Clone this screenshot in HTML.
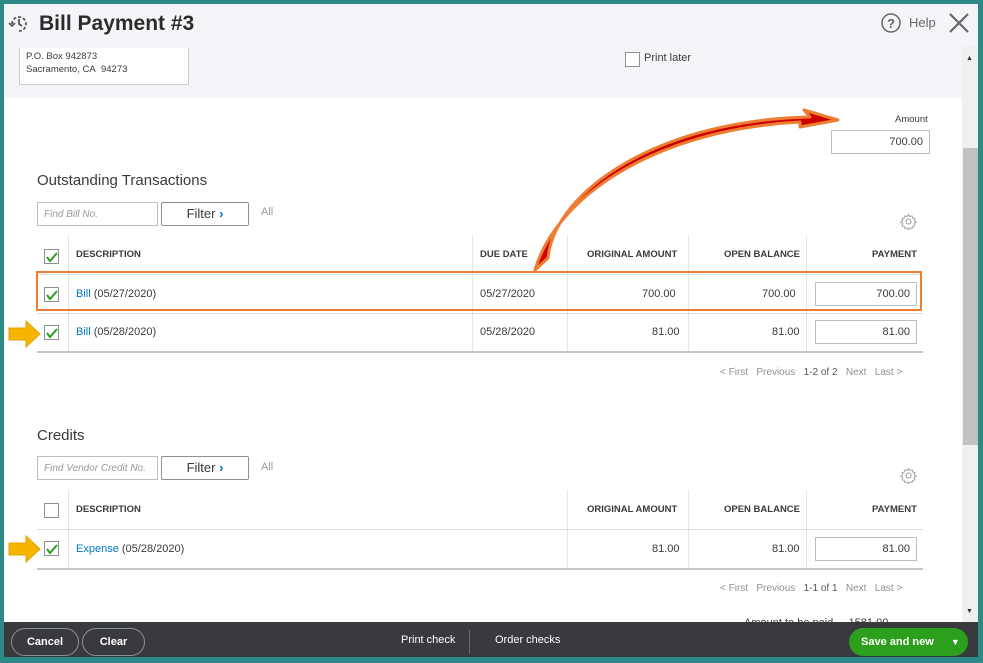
<!DOCTYPE html>
<html><head><style>
*{margin:0;padding:0;box-sizing:border-box}
body{width:983px;height:663px;overflow:hidden;background:#2e8a86;font-family:"Liberation Sans",sans-serif;color:#393a3d;position:relative}
.a{position:absolute}
.dlg{left:4px;top:4px;width:974px;height:653px;background:#fff;overflow:hidden}
.t{font-size:11px}
.h{font-size:9.5px;font-weight:bold;color:#393a3d}
.cb{width:15px;height:15px;border:1px solid #8d9096;background:#fff}
.cb svg{position:absolute;left:1px;top:1px}
.vl{width:1px;background:#e3e5e8}
.inp{border:1px solid #babec5;background:#fff;font-size:11px;text-align:right;padding-right:6px;line-height:22px}
.lnk{color:#0077c5}
.btn{border:1px solid #8d9096;border-radius:2px;background:#fff;font-size:13px;text-align:center}
.pg{font-size:10px;color:#8d9096}
</style></head><body>
<div class="a dlg">
 <div class="a" style="left:0;top:0;width:974px;height:94px;background:#f4f5f8"></div>
 <svg class="a" style="left:4px;top:9px" width="22" height="22" viewBox="0 0 22 22"><path d="M4 11a7 7 0 1 1 7 7" fill="none" stroke="#555" stroke-width="1.8" stroke-dasharray="3 2"/><path d="M11 6v5l3 2" fill="none" stroke="#555" stroke-width="1.8"/><path d="M1 10l3 3 3-3" fill="none" stroke="#555" stroke-width="1.6"/></svg>
 <div class="a" style="left:35px;top:8px;font-size:21px;font-weight:bold;color:#2b2b2b">Bill Payment #3</div>
 <svg class="a" style="left:877px;top:9px" width="20" height="20"><circle cx="10" cy="10" r="9" fill="none" stroke="#666" stroke-width="1.5"/><text x="10" y="15" font-size="13" font-weight="bold" text-anchor="middle" fill="#666" font-family="Liberation Sans">?</text></svg>
 <div class="a" style="left:905px;top:11px;font-size:13px;color:#666">Help</div>
 <svg class="a" style="left:945px;top:9px" width="20" height="20"><path d="M1 1L19 19M19 1L1 19" stroke="#666" stroke-width="2.2"/></svg>
 <div class="a" style="left:15px;top:44px;width:170px;height:37px;background:#fff;border:1px solid #c9cbd0;border-top:none;font-size:9.5px;line-height:13px;padding:2px 6px">P.O. Box 942873<br>Sacramento, CA&nbsp; 94273</div>
 <div class="a cb" style="left:621px;top:48px"></div>
 <div class="a t" style="left:640px;top:48px">Print later</div>
 <div class="a" style="left:958px;top:42px;width:16px;height:580px;background:#f0f0f0"></div>
 <div class="a" style="left:959px;top:144px;width:15px;height:297px;background:#c1c1c1"></div>
 <div class="a" style="left:962px;top:51px;font-size:7px;color:#333">▲</div>
 <div class="a" style="left:962px;top:604px;font-size:7px;color:#333">▼</div>

 <div class="a" style="left:891px;top:110px;font-size:9.5px">Amount</div>
 <div class="a inp" style="left:827px;top:126px;width:99px;height:24px">700.00</div>

 <div class="a" style="left:33px;top:168px;font-size:15px">Outstanding Transactions</div>
 <div class="a" style="left:33px;top:198px;width:121px;height:24px;border:1px solid #babec5;font-size:10px;font-style:italic;color:#999;padding:6px 6px">Find Bill No.</div>
 <div class="a btn" style="left:157px;top:198px;width:88px;height:24px;line-height:22px">Filter <b style="color:#0077c5">›</b></div>
 <div class="a t" style="left:257px;top:202px;color:#999">All</div>
 <svg class="a" style="left:896px;top:209px" width="17" height="17" viewBox="0 0 24 24"><circle cx="12" cy="12" r="3.5" fill="none" stroke="#999" stroke-width="1.5"/><path d="M12 2l2 3 3-1 1 3 3 1-1 3 3 2-3 2 1 3-3 1-1 3-3-1-2 3-2-3-3 1-1-3-3-1 1-3-3-2 3-2-1-3 3-1 1-3 3 1z" fill="none" stroke="#999" stroke-width="1.3"/></svg>

 <div class="a vl" style="left:64px;top:232px;height:116px"></div>
 <div class="a vl" style="left:468px;top:232px;height:116px"></div>
 <div class="a vl" style="left:563px;top:232px;height:116px"></div>
 <div class="a vl" style="left:684px;top:232px;height:116px"></div>
 <div class="a vl" style="left:802px;top:232px;height:116px"></div>
 <div class="a" style="left:33px;top:270px;width:886px;height:1px;background:#dcdee2"></div>
 <div class="a" style="left:33px;top:309px;width:886px;height:1px;background:#dcdee2"></div>
 <div class="a" style="left:33px;top:347px;width:886px;height:2px;background:#c4c6cb"></div>
 <div class="a cb" style="left:40px;top:245px"><svg width="12" height="12"><path d="M1 6l3 4 7-8" fill="none" stroke="#2ca01c" stroke-width="2"/></svg></div>
 <div class="a h" style="left:72px;top:245px">DESCRIPTION</div>
 <div class="a h" style="left:476px;top:245px">DUE DATE</div>
 <div class="a h" style="left:583px;top:245px">ORIGINAL AMOUNT</div>
 <div class="a h" style="left:720px;top:245px">OPEN BALANCE</div>
 <div class="a h" style="left:868px;top:245px">PAYMENT</div>

 <div class="a cb" style="left:40px;top:283px"><svg width="12" height="12"><path d="M1 6l3 4 7-8" fill="none" stroke="#2ca01c" stroke-width="2"/></svg></div>
 <div class="a t" style="left:72px;top:284px"><span class="lnk">Bill</span> (05/27/2020)</div>
 <div class="a t" style="left:476px;top:284px">05/27/2020</div>
 <div class="a t" style="left:638px;top:284px">700.00</div>
 <div class="a t" style="left:758px;top:284px">700.00</div>
 <div class="a inp" style="left:811px;top:278px;width:102px;height:24px">700.00</div>

 <div class="a cb" style="left:40px;top:321px"><svg width="12" height="12"><path d="M1 6l3 4 7-8" fill="none" stroke="#2ca01c" stroke-width="2"/></svg></div>
 <div class="a t" style="left:72px;top:322px"><span class="lnk">Bill</span> (05/28/2020)</div>
 <div class="a t" style="left:476px;top:322px">05/28/2020</div>
 <div class="a t" style="left:648px;top:322px">81.00</div>
 <div class="a t" style="left:768px;top:322px">81.00</div>
 <div class="a inp" style="left:811px;top:316px;width:102px;height:24px">81.00</div>
 <div class="a" style="left:32px;top:267px;width:886px;height:40px;border:2px solid #ed7d31"></div>
 <div class="a pg" style="left:716px;top:363px">&lt; First&nbsp;&nbsp; Previous&nbsp;&nbsp; <b style="color:#555;font-weight:normal">1-2 of 2</b>&nbsp;&nbsp; Next&nbsp;&nbsp; Last &gt;</div>

 <div class="a" style="left:33px;top:423px;font-size:15px">Credits</div>
 <div class="a" style="left:33px;top:452px;width:121px;height:24px;border:1px solid #babec5;font-size:10px;font-style:italic;color:#999;padding:6px 6px">Find Vendor Credit No.</div>
 <div class="a btn" style="left:157px;top:452px;width:88px;height:24px;line-height:22px">Filter <b style="color:#0077c5">›</b></div>
 <div class="a t" style="left:257px;top:457px;color:#999">All</div>
 <svg class="a" style="left:896px;top:463px" width="17" height="17" viewBox="0 0 24 24"><circle cx="12" cy="12" r="3.5" fill="none" stroke="#999" stroke-width="1.5"/><path d="M12 2l2 3 3-1 1 3 3 1-1 3 3 2-3 2 1 3-3 1-1 3-3-1-2 3-2-3-3 1-1-3-3-1 1-3-3-2 3-2-1-3 3-1 1-3 3 1z" fill="none" stroke="#999" stroke-width="1.3"/></svg>
 <div class="a vl" style="left:64px;top:486px;height:78px"></div>
 <div class="a vl" style="left:563px;top:486px;height:78px"></div>
 <div class="a vl" style="left:684px;top:486px;height:78px"></div>
 <div class="a vl" style="left:802px;top:486px;height:78px"></div>
 <div class="a" style="left:33px;top:525px;width:886px;height:1px;background:#dcdee2"></div>
 <div class="a" style="left:33px;top:564px;width:886px;height:2px;background:#c4c6cb"></div>
 <div class="a cb" style="left:40px;top:499px"></div>
 <div class="a h" style="left:72px;top:500px">DESCRIPTION</div>
 <div class="a h" style="left:583px;top:500px">ORIGINAL AMOUNT</div>
 <div class="a h" style="left:720px;top:500px">OPEN BALANCE</div>
 <div class="a h" style="left:868px;top:500px">PAYMENT</div>
 <div class="a cb" style="left:40px;top:537px"><svg width="12" height="12"><path d="M1 6l3 4 7-8" fill="none" stroke="#2ca01c" stroke-width="2"/></svg></div>
 <div class="a t" style="left:72px;top:539px"><span class="lnk">Expense</span> (05/28/2020)</div>
 <div class="a t" style="left:648px;top:539px">81.00</div>
 <div class="a t" style="left:768px;top:539px">81.00</div>
 <div class="a inp" style="left:811px;top:533px;width:102px;height:24px">81.00</div>
 <div class="a pg" style="left:716px;top:579px">&lt; First&nbsp;&nbsp; Previous&nbsp;&nbsp; <b style="color:#555;font-weight:normal">1-1 of 1</b>&nbsp;&nbsp; Next&nbsp;&nbsp; Last &gt;</div>
 <div class="a t" style="left:740px;top:613px">Amount to be paid&nbsp;&nbsp;&nbsp;&nbsp; 1581.00</div>
</div>

<svg class="a" style="left:8px;top:320px" width="34" height="28"><path d="M1 8h17V1l14 13-14 13v-7H1z" fill="#f7b500" stroke="#e5a100"/></svg>
<svg class="a" style="left:8px;top:535px" width="34" height="28"><path d="M1 8h17V1l14 13-14 13v-7H1z" fill="#f7b500" stroke="#e5a100"/></svg>
<svg class="a" style="left:0;top:0" width="983" height="663"><path d="M535 270 C 555 200, 650 130, 800 122 L 800 127 L 838 120 L 804 110 L 810 117 C 660 120, 555 190, 548 258 Z" fill="#c00" stroke="#ed7d31" stroke-width="3" stroke-linejoin="round"/></svg>

<div class="a" style="left:4px;top:622px;width:974px;height:35px;background:#393a3d"></div>
<div class="a" style="left:11px;top:628px;width:68px;height:28px;border:1px solid #8d9096;border-radius:14px;color:#fff;font-size:11px;font-weight:bold;text-align:center;line-height:26px">Cancel</div>
<div class="a" style="left:82px;top:628px;width:63px;height:28px;border:1px solid #8d9096;border-radius:14px;color:#fff;font-size:11px;font-weight:bold;text-align:center;line-height:26px">Clear</div>
<div class="a" style="left:401px;top:634px;color:#fff;font-size:11px">Print check</div>
<div class="a" style="left:469px;top:630px;width:1px;height:24px;background:#666"></div>
<div class="a" style="left:495px;top:634px;color:#fff;font-size:11px">Order checks</div>
<div class="a" style="left:849px;top:628px;width:119px;height:28px;background:#2ca01c;border-radius:14px;color:#fff;font-size:11px;font-weight:bold;line-height:28px;padding-left:12px">Save and new <span style="margin-left:14px;font-size:9px">▼</span></div>
</body></html>
